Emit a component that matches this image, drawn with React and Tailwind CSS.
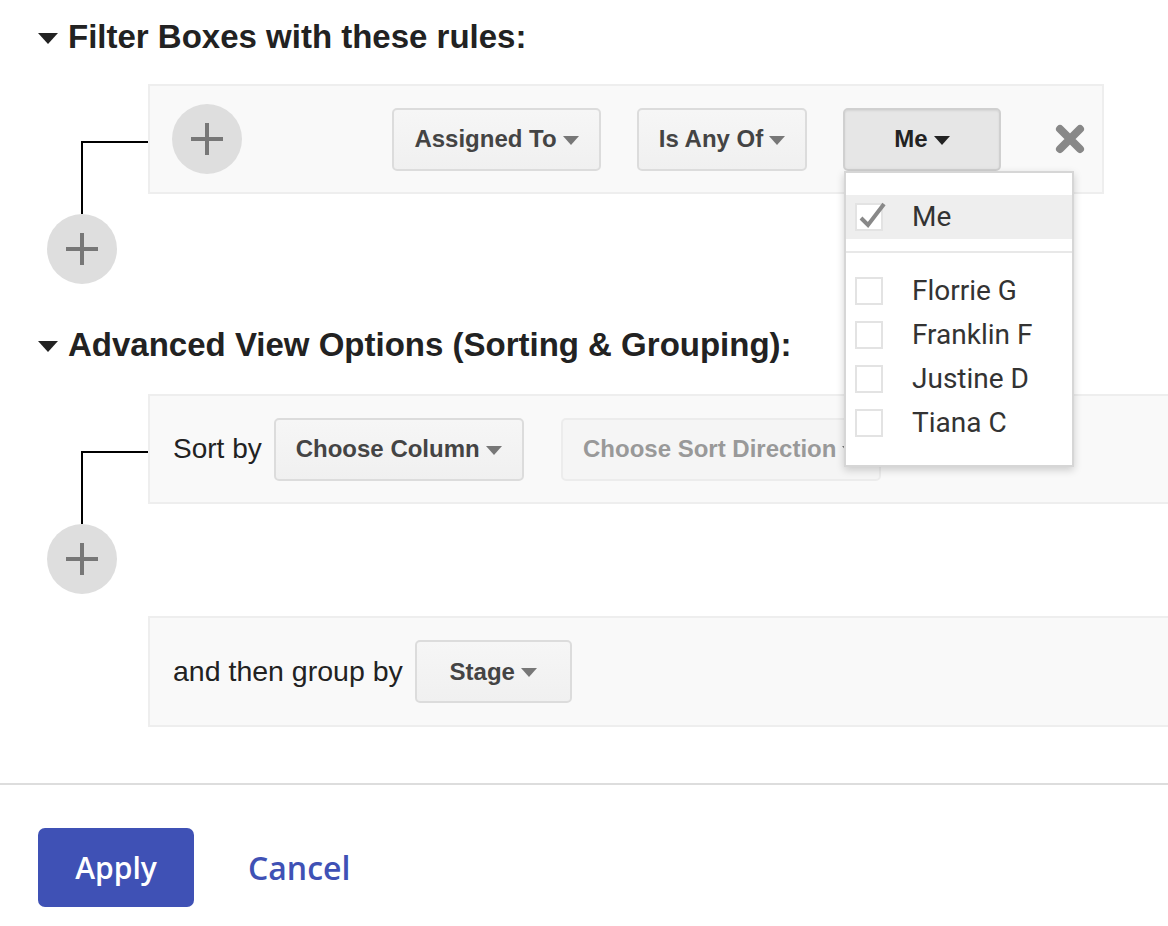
import React from 'react';

const sans = { fontFamily: '"Liberation Sans", Arial, sans-serif' };

function Caret({ dark }) {
  return (
    <svg width="16" height="9" viewBox="0 0 16 9" className="ml-[6px] mt-[2px]">
      <path d="M0 0 L16 0 L8 9 Z" fill={dark ? '#222' : '#777'} />
    </svg>
  );
}

function HeadTriangle() {
  return (
    <svg width="20" height="11" viewBox="0 0 20 11" className="mr-[10px] mt-[2px]">
      <path d="M0 0 L20 0 L10 11 Z" fill="#222" />
    </svg>
  );
}

function PlusCircle() {
  return (
    <div className="w-[70px] h-[70px] rounded-full bg-[#dedede] flex items-center justify-center shrink-0">
      <svg width="34" height="34" viewBox="0 0 34 34">
        <path d="M17 1 V33 M1 17 H33" stroke="#777" strokeWidth="4" />
      </svg>
    </div>
  );
}

function SelectButton({ label, width, pressed, disabled }) {
  return (
    <div
      className={`h-[63px] rounded-[5px] border-2 flex items-center justify-center text-[24px] font-bold shrink-0 ${
        pressed
          ? 'bg-[#e6e6e6] border-[#d0d0d0] text-[#222] shadow-[inset_0_1px_2px_rgba(0,0,0,0.08)]'
          : disabled
          ? 'bg-[#f5f5f5] border-[#ececec] text-[#999]'
          : 'bg-gradient-to-b from-[#f6f6f6] to-[#f0f0f0] border-[#dcdcdc] text-[#444]'
      }`}
      style={{ width }}
    >
      <span>{label}</span>
      <Caret dark={pressed} />
    </div>
  );
}

function Heading({ children }) {
  return (
    <div className="flex items-center h-[38px] text-[33px] font-bold text-[#222]">
      <HeadTriangle />
      <span>{children}</span>
    </div>
  );
}

// box on the right, connector + add button in the gutter on the left
function RuleGroup({ children, boxWidth }) {
  return (
    <div className="flex">
      <div className="w-[101px] ml-[9px] flex flex-col shrink-0">
        <div className="h-[57px]" />
        <div className="h-[73px] ml-[34px] border-l-2 border-t-2 border-black" />
        <PlusCircle />
      </div>
      <div
        className="h-[110px] bg-[#f9f9f9] border-2 border-[#eeeeee] flex items-center shrink-0"
        style={{ width: boxWidth }}
      >
        {children}
      </div>
    </div>
  );
}

function MenuRow({ name, checked }) {
  return (
    <div className={`h-[44px] flex items-center pl-[9px] ${checked ? 'bg-[#eeeeee]' : ''}`}>
      <div className="relative w-[28px] h-[28px] border-2 border-[#e3e3e3] bg-white shrink-0">
        {checked && (
          <svg width="30" height="28" viewBox="0 0 30 28" className="absolute left-[1px] top-[-4px]">
            <path d="M3 17 L10 24 L26 3" stroke="#888" strokeWidth="4" fill="none" />
          </svg>
        )}
      </div>
      <span
        className="ml-[29px] text-[28px] text-[#333]"
        style={{ fontFamily: 'Roboto, "Noto Sans", sans-serif' }}
      >
        {name}
      </span>
    </div>
  );
}

export default function App() {
  return (
    <div className="w-[1168px] h-[926px] bg-white overflow-hidden" style={sans}>
      <div className="pl-[38px] pt-[18px]">
        <Heading>Filter Boxes with these rules:</Heading>

        <div className="mt-[28px]">
          <RuleGroup boxWidth={956}>
            <div className="pl-[22px] flex items-center">
              <PlusCircle />
              <div className="ml-[150px]">
                <SelectButton label="Assigned To" width={209} />
              </div>
              <div className="ml-[36px]">
                <SelectButton label="Is Any Of" width={170} />
              </div>
              <div className="ml-[36px] relative">
                <SelectButton label="Me" width={158} pressed />
                {/* open dropdown */}
                <div className="absolute left-[1px] top-[63px] w-[230px] h-[296px] bg-white border-2 border-[#d6d6d6] shadow-[0_3px_8px_rgba(0,0,0,0.18)] z-10 pt-[22px]">
                  <MenuRow name="Me" checked />
                  <div className="mt-[12px] border-t-2 border-[#e8e8e8]" />
                  <div className="mt-[16px]">
                    <MenuRow name="Florrie G" />
                    <MenuRow name="Franklin F" />
                    <MenuRow name="Justine D" />
                    <MenuRow name="Tiana C" />
                  </div>
                </div>
              </div>
              <svg width="30" height="30" viewBox="0 0 30 30" className="ml-[54px]">
                <path d="M5 5 L25 25 M25 5 L5 25" stroke="#888" strokeWidth="8" strokeLinecap="round" />
              </svg>
            </div>
          </RuleGroup>
        </div>

        <div className="mt-[42px]">
          <Heading>Advanced View Options (Sorting &amp; Grouping):</Heading>
        </div>

        <div className="mt-[30px]">
          <RuleGroup boxWidth={1100}>
            <div className="pl-[23px] flex items-center">
              <span className="text-[28px] text-[#222]">Sort by</span>
              <div className="ml-[12px]">
                <SelectButton label="Choose Column" width={250} />
              </div>
              <div className="ml-[37px]">
                <SelectButton label="Choose Sort Direction" width={320} disabled />
              </div>
            </div>
          </RuleGroup>
        </div>

        <div className="mt-[22px] ml-[110px] w-[1100px] h-[111px] bg-[#f9f9f9] border-2 border-[#eeeeee] flex items-center pl-[23px]">
          <span className="text-[28.5px] text-[#222]">and then group by</span>
          <div className="ml-[12px]">
            <SelectButton label="Stage" width={157} />
          </div>
        </div>
      </div>

      <div className="mt-[56px] border-t-2 border-[#dddddd]" />

      <div className="pl-[38px] mt-[43px] flex items-center" style={{ fontFamily: '"Open Sans", Lato, sans-serif' }}>
        <button className="w-[156px] h-[79px] rounded-[7px] bg-[#3f51b5] text-white text-[30px] font-semibold">
          Apply
        </button>
        <button className="ml-[54px] text-[#3f51b5] text-[32px] font-semibold">Cancel</button>
      </div>
    </div>
  );
}
